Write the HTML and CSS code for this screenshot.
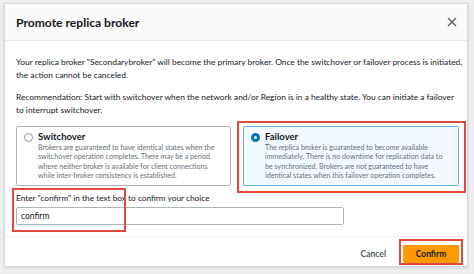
FILE: index.html
```html
<!DOCTYPE html>
<html>
<head>
<meta charset="utf-8">
<link rel="stylesheet" href="styles.css">
</head>
<body>
<div class="modal">
  <div class="header">
    <h1 class="title">Promote replica broker</h1>
    <svg class="close" width="10" height="10" viewBox="0 0 10 10"><path d="M1 1L9 9M9 1L1 9" stroke="#545b64" stroke-width="1.4" fill="none"/></svg>
  </div>
  <div class="body">
    <p class="para">Your replica broker "Secondarybroker" will become the primary broker. Once the switchover or failover process is initiated, the action cannot be canceled.</p>
    <p class="para">Recommendation: Start with switchover when the network and/or Region is in a healthy state. You can initiate a failover to interrupt switchover.</p>
    <div class="tiles">
      <div class="tile">
        <span class="radio"></span>
        <div class="tile-text">
          <div class="tile-title">Switchover</div>
          <div class="tile-desc">Brokers are guaranteed to have identical states when the switchover operation completes. There may be a period where neither broker is available for client connections while inter-broker consistency is established.</div>
        </div>
      </div>
      <div class="tile selected">
        <span class="radio checked"></span>
        <div class="tile-text">
          <div class="tile-title">Failover</div>
          <div class="tile-desc">The replica broker is guaranteed to become available immediately. There is no downtime for replication data to be synchronized. Brokers are not guaranteed to have identical states when this failover operation completes.</div>
        </div>
        <span class="mark mark-tile"></span>
      </div>
    </div>
    <div class="field">
      <label class="label">Enter "confirm" in the text box to confirm your choice</label>
      <div class="input">confirm</div>
      <span class="mark mark-field"></span>
    </div>
  </div>
  <div class="footer">
    <span class="cancel">Cancel</span>
    <span class="confirm-wrap">
      <span class="confirm">Confirm</span>
      <span class="mark mark-btn"></span>
    </span>
  </div>
</div>
</body>
</html>
```
FILE: styles.css
```css
* { box-sizing: border-box; }
html, body { margin: 0; padding: 0; }
body {
  width: 474px;
  height: 274px;
  background: #eceeef;
  font-family: Lato, "Noto Sans", sans-serif;
  color: #16191f;
  overflow: hidden;
  padding-top: 3px;
  padding-left: 4px;
}
.modal {
  width: 464px;
  height: 264px;
  background: #fff;
  border: 1px solid #d5dbdb;
  box-shadow: 0 1px 3px rgba(0,0,0,0.12);
  display: flex;
  flex-direction: column;
}
.header {
  height: 37px;
  background: #fafafa;
  border-bottom: 1px solid #eaeded;
  display: flex;
  align-items: center;
  justify-content: space-between;
  padding: 0 10px 0 11px;
  flex: none;
}
.title {
  margin: 0;
  font-size: 12.1px;
  font-weight: 700;
}
.close { display: block; }
.body {
  padding: 15px 8px 0 11px;
  flex: 1;
}
.para {
  margin: 0 -4px 9px 0;
  font-size: 8.4px;
  line-height: 13px;
}
.tiles {
  display: grid;
  grid-template-columns: 215px 216px;
  column-gap: 12px;
  margin-top: 0;
}
.tile {
  position: relative;
  height: 60px;
  border: 1px solid #aab7b8;
  border-radius: 2px;
  display: flex;
  padding: 4px 12px 0 7px;
  gap: 5px;
}
.tile.selected {
  background: #f1faff;
  border-color: #6aaed6;
}
.radio {
  flex: none;
  width: 9px;
  height: 9px;
  border: 1px solid #8d99a8;
  border-radius: 50%;
  margin-top: 2px;
  background: #fff;
}
.radio.checked {
  border: 3px solid #0073bb;
}
.tile-title {
  font-size: 9.5px;
  line-height: 12px;
  font-weight: 700;
}
.tile-desc {
  font-size: 7.1px;
  line-height: 9.3px;
  color: #687078;
}
.field {
  position: relative;
  margin-top: 6px;
}
.label {
  display: block;
  font-size: 8.3px;
  line-height: 12px;
}
.input {
  margin-top: 3px;
  width: 328px;
  height: 18px;
  border: 1px solid #aab7b8;
  border-radius: 2px;
  font-size: 8.5px;
  line-height: 16px;
  padding-left: 4px;
}
.mark {
  position: absolute;
  border: 2px solid #df4a3c;
}
.mark-tile {
  left: -7px;
  top: -6px;
  right: -8px;
  bottom: -8px;
}
.mark-field {
  left: -4px;
  top: -4px;
  width: 114px;
  height: 44px;
}
.footer {
  height: 30px;
  border-top: 1px solid #f0f1f1;
  display: flex;
  align-items: center;
  justify-content: flex-end;
  padding: 4px 8px 0 0;
  flex: none;
}
.cancel {
  font-size: 8.5px;
  font-weight: 700;
  color: #545b64;
  margin-right: 17px;
}
.confirm-wrap { position: relative; display: block; }
.confirm {
  display: block;
  width: 56px;
  height: 18px;
  background: #ff9900;
  border-radius: 2px;
  font-size: 8.5px;
  font-weight: 700;
  line-height: 18px;
  text-align: center;
  color: #16191f;
}
.mark-btn {
  left: -4px;
  top: -6px;
  width: 64px;
  height: 26px;
}
```
